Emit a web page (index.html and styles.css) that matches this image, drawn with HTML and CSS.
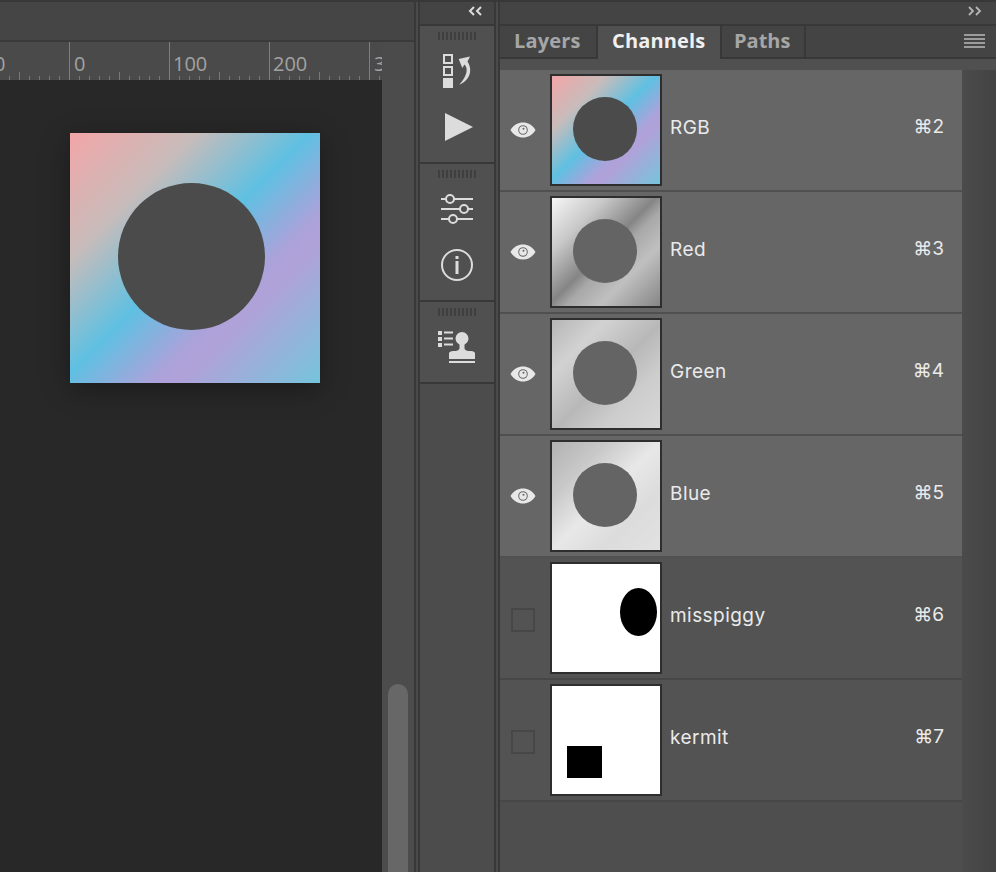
FILE: index.html
```html
<!DOCTYPE html>
<html lang="en">
<head>
<meta charset="utf-8">
<title>Channels</title>
<link rel="stylesheet" href="styles.css">
</head>
<body>
<div class="app">
  <section class="doc">
    <div class="doc-title"></div>
    <div class="ruler-row">
      <svg class="ruler" width="382" height="38" viewBox="0 42 382 38">
        <g class="tick-major"><path d="M69.500 42V80M169.500 42V80M269.500 42V80M369.500 42V80"/></g>
        <g class="tick-minor"><path d="M9.500 76V80M19.500 72V80M29.500 76V80M39.500 76V80M49.500 76V80M59.500 76V80M79.500 76V80M89.500 76V80M99.500 76V80M109.500 76V80M119.500 72V80M129.500 76V80M139.500 76V80M149.500 76V80M159.500 76V80M179.500 76V80M189.500 76V80M199.500 76V80M209.500 76V80M219.500 72V80M229.500 76V80M239.500 76V80M249.500 76V80M259.500 76V80M279.500 76V80M289.500 76V80M299.500 76V80M309.500 76V80M319.500 72V80M329.500 76V80M339.500 76V80M349.500 76V80M359.500 76V80M379.500 76V80"/></g>
        <text x="-6" y="71">0</text><text x="74" y="71">0</text><text x="173" y="71">100</text><text x="273" y="71">200</text><text x="374" y="71">3</text>
      </svg>
      <div class="ruler-end"></div>
    </div>
    <div class="work">
      <div class="canvas">
        <div class="art"><div class="art-hole"></div></div>
      </div>
      <div class="scroll"><div class="scroll-thumb"></div></div>
    </div>
  </section>
  <div class="split"></div>
  <aside class="dock">
    <div class="dock-head"><svg width="14" height="10" viewBox="0 0 14 10"><path class="chev" d="M6 1 2 5l4 4M13 1 9 5l4 4"/></svg></div>
    <div class="dock-group">
      <div class="grip"></div>
      <svg class="tool tool-history" width="34" height="36" viewBox="0 0 34 36"><path class="line" d="M2 2h8v8H2zM2 14h8v8H2z"/><rect class="solid" x="1" y="25" width="10" height="10"/><path class="solid" d="M28 3.500 16.700 6 20.300 15 22.500 11.500C26 15 26 22 17.300 31.700 27 28 31.500 18 25.500 8.500Z"/></svg>
      <svg class="tool tool-play" width="28" height="28" viewBox="0 0 28 28"><path class="solid" d="M0 0 28 14 0 28Z"/></svg>
    </div>
    <div class="dock-group">
      <div class="grip"></div>
      <svg class="tool tool-sliders" width="34" height="30" viewBox="0 0 34 30"><path class="line" d="M1 5h4.500M14 5h19M1 15h19M28 15h5M1 25h8M17 25h16"/><circle class="line" cx="10" cy="5" r="4"/><circle class="line" cx="24" cy="15" r="4"/><circle class="line" cx="13" cy="25" r="4"/></svg>
      <svg class="tool tool-info" width="34" height="34" viewBox="0 0 34 34"><circle class="line" cx="17" cy="17" r="15"/><rect class="solid" x="15.500" y="8" width="3" height="3"/><rect class="solid" x="15.500" y="13" width="3" height="13"/></svg>
    </div>
    <div class="dock-group dock-group-last">
      <div class="grip"></div>
      <svg class="tool tool-stamp" width="40" height="34" viewBox="0 0 40 34"><path class="solid" d="M1 1h4v4H1zM1 7h4v4H1zM1 13h4v4H1zM7 1.500h9v2H7zM7 7.500h9v2H7zM7 13.500h9v2H7z"/><circle class="solid" cx="25" cy="8.500" r="6.500"/><path class="solid" d="M22.500 13h5v5c0 2.500 3 3 6 3 3 0 4.500 1 4.500 2.500V29H12v-5.500C12 22 13.500 21 16.500 21c3 0 6-.5 6-3ZM12 31h26v2H12Z"/></svg>
    </div>
    <div class="dock-rest"></div>
  </aside>
  <div class="split"></div>
  <main class="panel">
    <div class="panel-head"><svg width="14" height="10" viewBox="0 0 14 10"><path class="chev chev-dim" d="M1 1l4 4-4 4M8 1l4 4-4 4"/></svg></div>
    <nav class="tabs">
      <span class="tab">Layers</span>
      <span class="tab tab-active">Channels</span>
      <span class="tab tab-paths">Paths</span>
      <span class="tabs-fill"><span class="menu"></span></span>
    </nav>
    <div class="tab-strip"></div>
    <div class="body">
      <div class="rows">
        <div class="row row-on">
          <svg class="eye" width="26" height="16" viewBox="0 0 26 16"><path class="eye-shape" fill-rule="evenodd" d="M.5 8C4 2.500 8 .5 13 .5s9 2 12.500 7.500C22 13.500 18 15.500 13 15.500S4 13.500 .5 8ZM13 3.200a4.800 4.800 0 1 0 0 9.600 4.800 4.800 0 0 0 0-9.600Z"/><circle class="eye-shape" cx="13" cy="8" r="3.800"/><circle class="eye-dot" cx="13.500" cy="6.800" r="1"/></svg>
          <div class="thumb thumb-rgb"><div class="hole"></div></div>
          <span class="name">RGB</span><span class="key">⌘2</span>
        </div>
        <div class="row row-on">
          <svg class="eye" width="26" height="16" viewBox="0 0 26 16"><path class="eye-shape" fill-rule="evenodd" d="M.5 8C4 2.500 8 .5 13 .5s9 2 12.500 7.500C22 13.500 18 15.500 13 15.500S4 13.500 .5 8ZM13 3.200a4.800 4.800 0 1 0 0 9.600 4.800 4.800 0 0 0 0-9.600Z"/><circle class="eye-shape" cx="13" cy="8" r="3.800"/><circle class="eye-dot" cx="13.500" cy="6.800" r="1"/></svg>
          <div class="thumb thumb-red"><div class="hole hole-gray"></div></div>
          <span class="name">Red</span><span class="key">⌘3</span>
        </div>
        <div class="row row-on">
          <svg class="eye" width="26" height="16" viewBox="0 0 26 16"><path class="eye-shape" fill-rule="evenodd" d="M.5 8C4 2.500 8 .5 13 .5s9 2 12.500 7.500C22 13.500 18 15.500 13 15.500S4 13.500 .5 8ZM13 3.200a4.800 4.800 0 1 0 0 9.600 4.800 4.800 0 0 0 0-9.600Z"/><circle class="eye-shape" cx="13" cy="8" r="3.800"/><circle class="eye-dot" cx="13.500" cy="6.800" r="1"/></svg>
          <div class="thumb thumb-green"><div class="hole hole-gray"></div></div>
          <span class="name">Green</span><span class="key">⌘4</span>
        </div>
        <div class="row row-on">
          <svg class="eye" width="26" height="16" viewBox="0 0 26 16"><path class="eye-shape" fill-rule="evenodd" d="M.5 8C4 2.500 8 .5 13 .5s9 2 12.500 7.500C22 13.500 18 15.500 13 15.500S4 13.500 .5 8ZM13 3.200a4.800 4.800 0 1 0 0 9.600 4.800 4.800 0 0 0 0-9.600Z"/><circle class="eye-shape" cx="13" cy="8" r="3.800"/><circle class="eye-dot" cx="13.500" cy="6.800" r="1"/></svg>
          <div class="thumb thumb-blue"><div class="hole hole-gray"></div></div>
          <span class="name">Blue</span><span class="key">⌘5</span>
        </div>
        <div class="row">
          <div class="check"></div>
          <div class="thumb thumb-mask"><div class="oval"></div></div>
          <span class="name">misspiggy</span><span class="key">⌘6</span>
        </div>
        <div class="row">
          <div class="check"></div>
          <div class="thumb thumb-mask"><div class="block"></div></div>
          <span class="name">kermit</span><span class="key">⌘7</span>
        </div>
      </div>
      <div class="gutter"></div>
    </div>
  </main>
</div>
</body>
</html>
```
FILE: styles.css
```css
* { box-sizing: border-box; }
html, body { margin: 0; height: 100%; }
body { background: #4a4a4a; overflow: hidden; font-family: Inter, "Noto Sans", sans-serif; }
.app { display: flex; width: 996px; height: 872px; border-top: 2px solid #383838; overflow: hidden; }

.doc { width: 414px; flex: none; display: flex; flex-direction: column; background: #4b4b4b; }
.doc-title { height: 38px; background: #454545; flex: none; }
.ruler-row { display: flex; height: 40px; flex: none; border-top: 2px solid #3a3a3a; background: #4a4a4a; }
.ruler { display: block; flex: none; }
.ruler text { font: 20px "Open Sans", sans-serif; fill: #a2a2a2; }
.tick-major path { stroke: #7e7e7e; stroke-width: 1; fill: none; }
.tick-minor path { stroke: #777; stroke-width: 1; fill: none; }
.ruler-end { flex: 1; background: #4b4b4b; }
.work { flex: 1; display: flex; min-height: 0; }
.canvas { width: 382px; background: #282828; padding: 53px 0 0 70px; }
.art { width: 250px; height: 250px; padding: 50px 0 0 48px; background: linear-gradient(135deg, #f3a5a7 0%, #c8bcba 25%, #5fc0e2 48%, #aca2da 66%, #b0a2d8 72%, #76c4dc 100%); box-shadow: 0 6px 26px rgba(0,0,0,.35); }
.art-hole { width: 147px; height: 147px; border-radius: 50%; background: #4b4b4b; }
.scroll { flex: 1; background: #4c4c4c; padding: 604px 6px 0; }
.scroll-thumb { height: 188px; background: #676767; border-radius: 10px 10px 0 0; }

.split { width: 6px; flex: none; background: #4a4a4a; border-left: 2px solid #383838; border-right: 2px solid #383838; }

.dock { width: 74px; flex: none; display: flex; flex-direction: column; }
.dock-head { height: 24px; background: #444; border-bottom: 2px solid #383838; display: flex; justify-content: flex-end; align-items: center; padding: 0 12px 4px 0; flex: none; }
.chev { fill: none; stroke: #dcdcdc; stroke-width: 2; }
.chev-dim { stroke: #b4b4b4; stroke-width: 1.800; }
.dock-group { height: 138px; flex: none; background: #505050; border-bottom: 2px solid #383838; display: flex; flex-direction: column; align-items: center; padding-top: 6px; }
.dock-group-last { height: 82px; }
.dock-rest { flex: 1; background: #4c4c4c; }
.grip { width: 38px; height: 8px; flex: none; background: repeating-linear-gradient(90deg, #3f3f3f 0 2px, transparent 2px 4px); }
.tool { display: block; flex: none; }
.line { fill: none; stroke: #dcdcdc; stroke-width: 2; }
.solid { fill: #dcdcdc; }
.tool-history { margin: 13px 0 0 4px; }
.tool-play { margin: 24px 0 0 3px; }
.tool-sliders { margin: 16px 0 0; }
.tool-info { margin: 24px 0 0; }
.tool-stamp { margin: 14px 0 0; }

.panel { flex: 1; min-width: 0; display: flex; flex-direction: column; }
.panel-head { height: 24px; flex: none; background: #444; border-bottom: 2px solid #383838; display: flex; justify-content: flex-end; align-items: center; padding: 0 14px 4px 0; }
.tabs { display: flex; height: 33px; flex: none; background: #444; color: #a6a6a6; font: 700 20px "Open Sans", sans-serif; letter-spacing: .15px; }
.tab { width: 98px; padding-left: 14px; line-height: 29px; border-right: 2px solid #383838; border-bottom: 2px solid #383838; background: #444; }
.tab-active { width: 124px; color: #f0f0f0; background: #505050; border-bottom: 0; }
.tab-paths { width: 84px; padding-left: 12px; letter-spacing: 0; }
.tabs-fill { flex: 1; border-bottom: 2px solid #383838; display: flex; justify-content: flex-end; padding: 8px 11px 0 0; }
.menu { width: 21px; height: 14px; background: repeating-linear-gradient(180deg, #9c9c9c 0 2px, transparent 2px 4px); }
.tab-strip { height: 11px; flex: none; background: #505050; }
.body { flex: 1; min-height: 0; display: flex; }
.rows { width: 462px; flex: none; background: #4e4e4e; }
.gutter { flex: 1; background: linear-gradient(90deg, #4b4b4b, #434343); }
.row { height: 122px; display: flex; align-items: flex-start; background: #535353; border-bottom: 2px solid #474747; color: #eaeaea; }
.row-on { background: #666; border-bottom-color: #505050; }
.eye { flex: none; margin: 52px 0 0 10px; display: block; }
.eye-shape { fill: #e8e8e8; }
.eye-dot { fill: #666; }
.check { flex: none; width: 24px; height: 24px; margin: 50px 1px 0 11px; border: 2px solid #474747; }
.thumb { flex: none; width: 112px; height: 112px; margin: 4px 0 0 14px; border: 2px solid #2e2e2e; padding: 21px 0 0 21px; }
.thumb-rgb { background: linear-gradient(135deg, #f3a5a7 0%, #c8bcba 25%, #5fc0e2 48%, #aca2da 66%, #b0a2d8 72%, #76c4dc 100%); }
.thumb-red { background: linear-gradient(135deg, #f6f6f6 0%, #c8c8c8 25%, #858585 48%, #a8a8a8 56%, #c0c0c0 72%, #868686 100%); }
.thumb-green { background: linear-gradient(135deg, #b6b6b6 0%, #d2d2d2 25%, #b8b8b8 52%, #cccccc 72%, #d8d8d8 100%); }
.thumb-blue { background: linear-gradient(135deg, #b2b2b2 0%, #c8c8c8 25%, #e8e8e8 50%, #dcdcdc 72%, #e2e2e2 100%); }
.thumb-mask { background: #fff; padding: 0; }
.hole { width: 64px; height: 64px; border-radius: 50%; background: #4b4b4b; }
.hole-gray { background: #646464; }
.oval { width: 37px; height: 48px; border-radius: 50%; background: #000; margin: 24px 0 0 68px; }
.block { width: 35px; height: 32px; background: #000; margin: 60px 0 0 15px; }
.name { font-size: 19px; line-height: 24px; margin: 46px 0 0 8px; letter-spacing: .45px; }
.key { margin: 45px 18px 0 auto; font-size: 19px; line-height: 24px; font-family: Inter, "DejaVu Sans", sans-serif; }
```
